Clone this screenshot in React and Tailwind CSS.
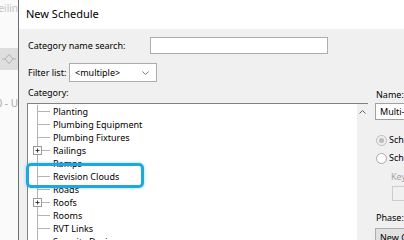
import React from 'react';

const categories = [
  { name: 'Planting' },
  { name: 'Plumbing Equipment' },
  { name: 'Plumbing Fixtures' },
  { name: 'Railings', expandable: true },
  { name: 'Ramps' },
  { name: 'Revision Clouds' },
  { name: 'Roads' },
  { name: 'Roofs', expandable: true },
  { name: 'Rooms' },
  { name: 'RVT Links' },
  { name: 'Security Devices' },
];

// tree connector drawn per row: vertical line, branch and optional [+] box
const TreeConnector = ({ expandable }) => (
  <svg width="25" height="13" className="shrink-0">
    <line x1="9.5" y1="0" x2="9.5" y2="13" stroke="#b4b4b4" />
    <line x1="9.5" y1="6.5" x2="22" y2="6.5" stroke="#b4b4b4" />
    {expandable && (
      <g>
        <rect x="5.5" y="2.5" width="8" height="8" fill="#fff" stroke="#9a9a9a" />
        <line x1="7.5" y1="6.5" x2="11.5" y2="6.5" stroke="#3b3b3b" />
        <line x1="9.5" y1="4.5" x2="9.5" y2="8.5" stroke="#3b3b3b" />
      </g>
    )}
  </svg>
);

const BackgroundStrip = () => (
  <div className="flex w-[18px] shrink-0 flex-col overflow-hidden bg-[#fafafa] text-[#c4c4c4]">
    <div className="mt-[2px] flex h-[12px] justify-end whitespace-nowrap text-[10px] leading-[12px]">Ceilin</div>
    <div className="mt-[34px] flex h-[22px] items-center justify-center bg-[#dedede]">
      <svg width="14" height="12" viewBox="0 0 14 12">
        <line x1="0" y1="6" x2="3" y2="6" stroke="#b0b0b0" />
        <line x1="11" y1="6" x2="14" y2="6" stroke="#b0b0b0" />
        <path d="M7 1.5 L11 6 L7 10.5 L3 6 Z" fill="none" stroke="#b0b0b0" />
      </svg>
    </div>
    <div className="mt-[27px] flex h-[12px] justify-end whitespace-nowrap text-[10px] leading-[12px] text-[#a8a8a8]">0 - U</div>
  </div>
);

export default function App() {
  return (
    <div className="relative flex h-[240px] w-[404px] overflow-hidden bg-white font-['Noto_Sans',sans-serif] text-[9px] text-black">
      <BackgroundStrip />

      <div className="flex min-w-0 flex-1 flex-col border-l border-[#6e6e6e]">
        <div className="flex h-[29px] shrink-0 items-center bg-white pl-[7px] text-[11px]">New Schedule</div>

        <div className="flex flex-1 bg-[#f0f0f0]">
          {/* left column */}
          <div className="flex w-[349px] shrink-0 flex-col pl-[8px]">
            <div className="mt-[8px] flex h-[17px] items-center">
              <span className="w-[123px] pl-[1px]">Category name search:</span>
              <div className="h-[17px] w-[178px] border border-[#adadad] bg-white" />
            </div>
            <div className="mt-[9px] flex h-[19px] items-center">
              <span className="w-[42px] pl-[1px]">Filter list:</span>
              <div className="flex h-[19px] w-[88px] items-center justify-between border border-[#adadad] bg-white pl-[5px] pr-[7px]">
                <span>&lt;multiple&gt;</span>
                <svg width="7" height="4" viewBox="0 0 7 4">
                  <path d="M0.5 0.5 L3.5 3.5 L6.5 0.5" fill="none" stroke="#7a7a7a" />
                </svg>
              </div>
            </div>
            <div className="mt-[5px] flex h-[12px] items-center pl-[1px]">Category:</div>
            <div className="mt-[4px] flex flex-1 border-l border-t border-[#828282] bg-white">
              <div className="flex flex-1 flex-col pt-[1px]">
                {categories.map((c) => (
                  <div key={c.name} className="flex h-[13px] items-center whitespace-nowrap">
                    <TreeConnector expandable={c.expandable} />
                    <span>{c.name}</span>
                  </div>
                ))}
              </div>
              <div className="flex w-[11px] justify-center bg-[#f0f0f0] pt-[6px]">
                <svg width="7" height="4" viewBox="0 0 7 4">
                  <path d="M0.5 3.5 L3.5 0.5 L6.5 3.5" fill="none" stroke="#606060" />
                </svg>
              </div>
            </div>
          </div>

          {/* right column */}
          <div className="ml-[7px] flex flex-1 flex-col whitespace-nowrap">
            <div className="mt-[60px] flex h-[12px] items-center pl-[1px]">Name:</div>
            <div className="mt-[2px] flex h-[17px] w-[40px] items-center border border-[#a0a0a0] bg-white pl-[4px]">Multi-Category</div>
            <div className="mt-[14px] flex h-[12px] items-center gap-[2px] pl-[1px]">
              <div className="flex h-[11px] w-[11px] items-center justify-center rounded-full border border-[#bcbcbc] bg-[#f0f0f0]">
                <div className="h-[5px] w-[5px] rounded-full bg-[#bcbcbc]" />
              </div>
              <span>Schedule building components</span>
            </div>
            <div className="mt-[6px] flex h-[12px] items-center gap-[2px] pl-[1px]">
              <div className="h-[11px] w-[11px] rounded-full border border-[#a8a8a8] bg-white" />
              <span>Schedule keys</span>
            </div>
            <div className="mt-[7px] flex h-[12px] items-center pl-[16px] text-[#a3a3a3]">Key name:</div>
            <div className="ml-[17px] mt-[3px] h-[15px] w-[40px] border border-[#cccccc] bg-[#f0f0f0]" />
            <div className="mt-[11px] flex h-[12px] items-center pl-[1px]">Phase:</div>
            <div className="mt-[4px] flex h-[20px] w-[60px] items-center border border-[#adadad] bg-[#e1e1e1] pl-[4px]">New Construction</div>
          </div>
        </div>
      </div>

      {/* annotation highlight */}
      <div className="pointer-events-none absolute left-[26px] top-[163px] h-[25px] w-[118px] rounded-[5px] border-[3px] border-[#1ea8e2] shadow-[0_0_3px_rgba(30,168,226,0.5)]" />
    </div>
  );
}
